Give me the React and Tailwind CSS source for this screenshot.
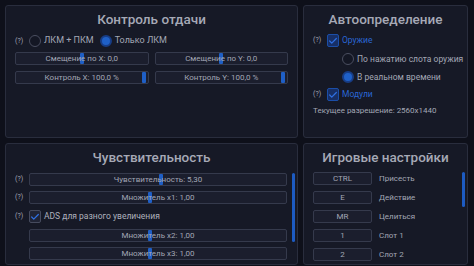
import { Check } from "lucide-react";

const FONT = { fontFamily: "Roboto, 'Noto Sans', sans-serif" };

const SENS = [
  { label: "Чувствительность: 5,30", pos: 51 },
  { label: "Множитель x1: 1,00", pos: 47 },
];

const SENS_ADS = [
  { label: "Множитель x2: 1,00", pos: 47 },
  { label: "Множитель x3: 1,00", pos: 47 },
];

const KEYS = [
  { key: "CTRL", label: "Присесть" },
  { key: "E", label: "Действие" },
  { key: "MR", label: "Целиться" },
  { key: "1", label: "Слот 1" },
  { key: "2", label: "Слот 2" },
];

function Panel({ title, children }) {
  return (
    <div className="flex flex-col overflow-hidden rounded-[3px] border border-[#292d3d] bg-[#161926]">
      <div className="pt-[4px] h-[23px] text-center text-[13.5px] leading-[18px] font-medium text-[#a6a9b6] shrink-0">
        {title}
      </div>
      {children}
    </div>
  );
}

function Slider({ label, pos, className = "" }) {
  return (
    <div className={`relative h-[13px] rounded-[2px] border border-[#353a4c] bg-[#1b1e2d] ${className}`}>
      <div
        className="absolute top-0 bottom-0 w-[4px] rounded-[1px] bg-[#1f5fc6]"
        style={{ left: `calc(${pos}% - 2px)` }}
      />
      <div className="relative text-center text-[8px] leading-[11px] text-[#a3a7b5]">{label}</div>
    </div>
  );
}

function Help() {
  return <span className="w-[14px] shrink-0 text-[7px] leading-none text-[#a3a7b5]">(?)</span>;
}

function Radio({ on }) {
  return on ? (
    <span className="block w-[12px] h-[12px] shrink-0 rounded-full border-[2px] border-[#173d86] bg-[#1f60c7]" />
  ) : (
    <span className="block w-[12px] h-[12px] shrink-0 rounded-full border border-[#4a4e60] bg-[#141724]" />
  );
}

function Box({ blue }) {
  return (
    <span
      className={`w-[12px] h-[13px] shrink-0 flex items-center justify-center rounded-[2px] border ${
        blue ? "border-[#1b4ea8] bg-[#172f66]" : "border-[#464b5e] bg-[#202435]"
      }`}
    >
      <Check className="w-[10px] h-[10px] text-[#2f6fe0]" strokeWidth={3} />
    </span>
  );
}

export default function App() {
  return (
    <div
      className="w-[474px] h-[266px] overflow-hidden bg-[#0e101a] pt-[5px] pl-[5px] grid grid-cols-[293px_165px] grid-rows-[133px_122px] gap-[5px]"
      style={FONT}
    >
      {/* ── Контроль отдачи ── */}
      <Panel title="Контроль отдачи">
        <div className="px-[9px] pt-[6px] flex flex-col">
          <div className="flex items-center h-[12px]">
            <Help />
            <Radio />
            <span className="ml-[3px] text-[9px] text-[#a3a7b5]">ЛКМ + ПКМ</span>
            <span className="ml-[6px]"><Radio on /></span>
            <span className="ml-[3px] text-[9px] text-[#a3a7b5]">Только ЛКМ</span>
          </div>
          <div className="mt-[5px] grid grid-cols-2 gap-x-[6px] gap-y-[6px]">
            <Slider label="Смещение по X: 0,0" pos={50} />
            <Slider label="Смещение по Y: 0,0" pos={50} />
            <Slider label="Контроль X: 100,0 %" pos={97} />
            <Slider label="Контроль Y: 100,0 %" pos={97} />
          </div>
        </div>
      </Panel>

      {/* ── Автоопределение ── */}
      <Panel title="Автоопределение">
        <div className="pl-[9px] pt-[5px] flex flex-col text-[8.5px] text-[#a3a7b5]">
          <div className="flex items-center h-[13px]">
            <Help />
            <Box blue />
            <span className="ml-[3px] text-[#2a66d4]">Оружие</span>
          </div>
          <div className="mt-[6px] ml-[29px] flex items-center h-[12px]">
            <Radio />
            <span className="ml-[3px]">По нажатию слота оружия</span>
          </div>
          <div className="mt-[6px] ml-[29px] flex items-center h-[12px]">
            <Radio on />
            <span className="ml-[3px]">В реальном времени</span>
          </div>
          <div className="mt-[5px] flex items-center h-[13px]">
            <Help />
            <Box blue />
            <span className="ml-[3px] text-[#2a66d4]">Модули</span>
          </div>
          <div className="mt-[5px] text-[8px] leading-[10px]">Текущее разрешение: 2560x1440</div>
        </div>
      </Panel>

      {/* ── Чувствительность ── */}
      <Panel title="Чувствительность">
        <div className="flex pl-[9px] pr-[1px] pt-[6px] min-h-0">
          <div className="flex-1 flex flex-col gap-[5px]">
            {SENS.map((s) => (
              <div key={s.label} className="flex items-center">
                <Help />
                <Slider label={s.label} pos={s.pos} className="flex-1" />
              </div>
            ))}
            <div className="flex items-center h-[15px]">
              <Help />
              <Box />
              <span className="ml-[3px] text-[8.5px] text-[#aeb1bd]">ADS для разного увеличения</span>
            </div>
            {SENS_ADS.map((s) => (
              <div key={s.label} className="flex items-center pl-[14px]">
                <Slider label={s.label} pos={s.pos} className="flex-1" />
              </div>
            ))}
          </div>
          <div className="w-[3px] ml-[5px] mr-[1px]">
            <div className="h-[69px] rounded-full bg-[#1d5bc2]" />
          </div>
        </div>
      </Panel>

      {/* ── Игровые настройки ── */}
      <Panel title="Игровые настройки">
        <div className="flex pl-[9px] pr-[1px] pt-[5px] min-h-0">
          <div className="flex-1 flex flex-col gap-[6px]">
            {KEYS.map((k) => (
              <div key={k.key} className="flex items-center">
                <div className="w-[59px] h-[13px] rounded-[2px] border border-[#353a4c] bg-[#1b1e2d] text-center text-[8px] leading-[11px] text-[#a3a7b5]">
                  {k.key}
                </div>
                <span className="ml-[7px] text-[8px] text-[#a3a7b5]">{k.label}</span>
              </div>
            ))}
          </div>
          <div className="w-[3px] ml-[4px] mr-[1px]">
            <div className="h-[35px] rounded-full bg-[#1d5bc2]" />
          </div>
        </div>
      </Panel>
    </div>
  );
}
